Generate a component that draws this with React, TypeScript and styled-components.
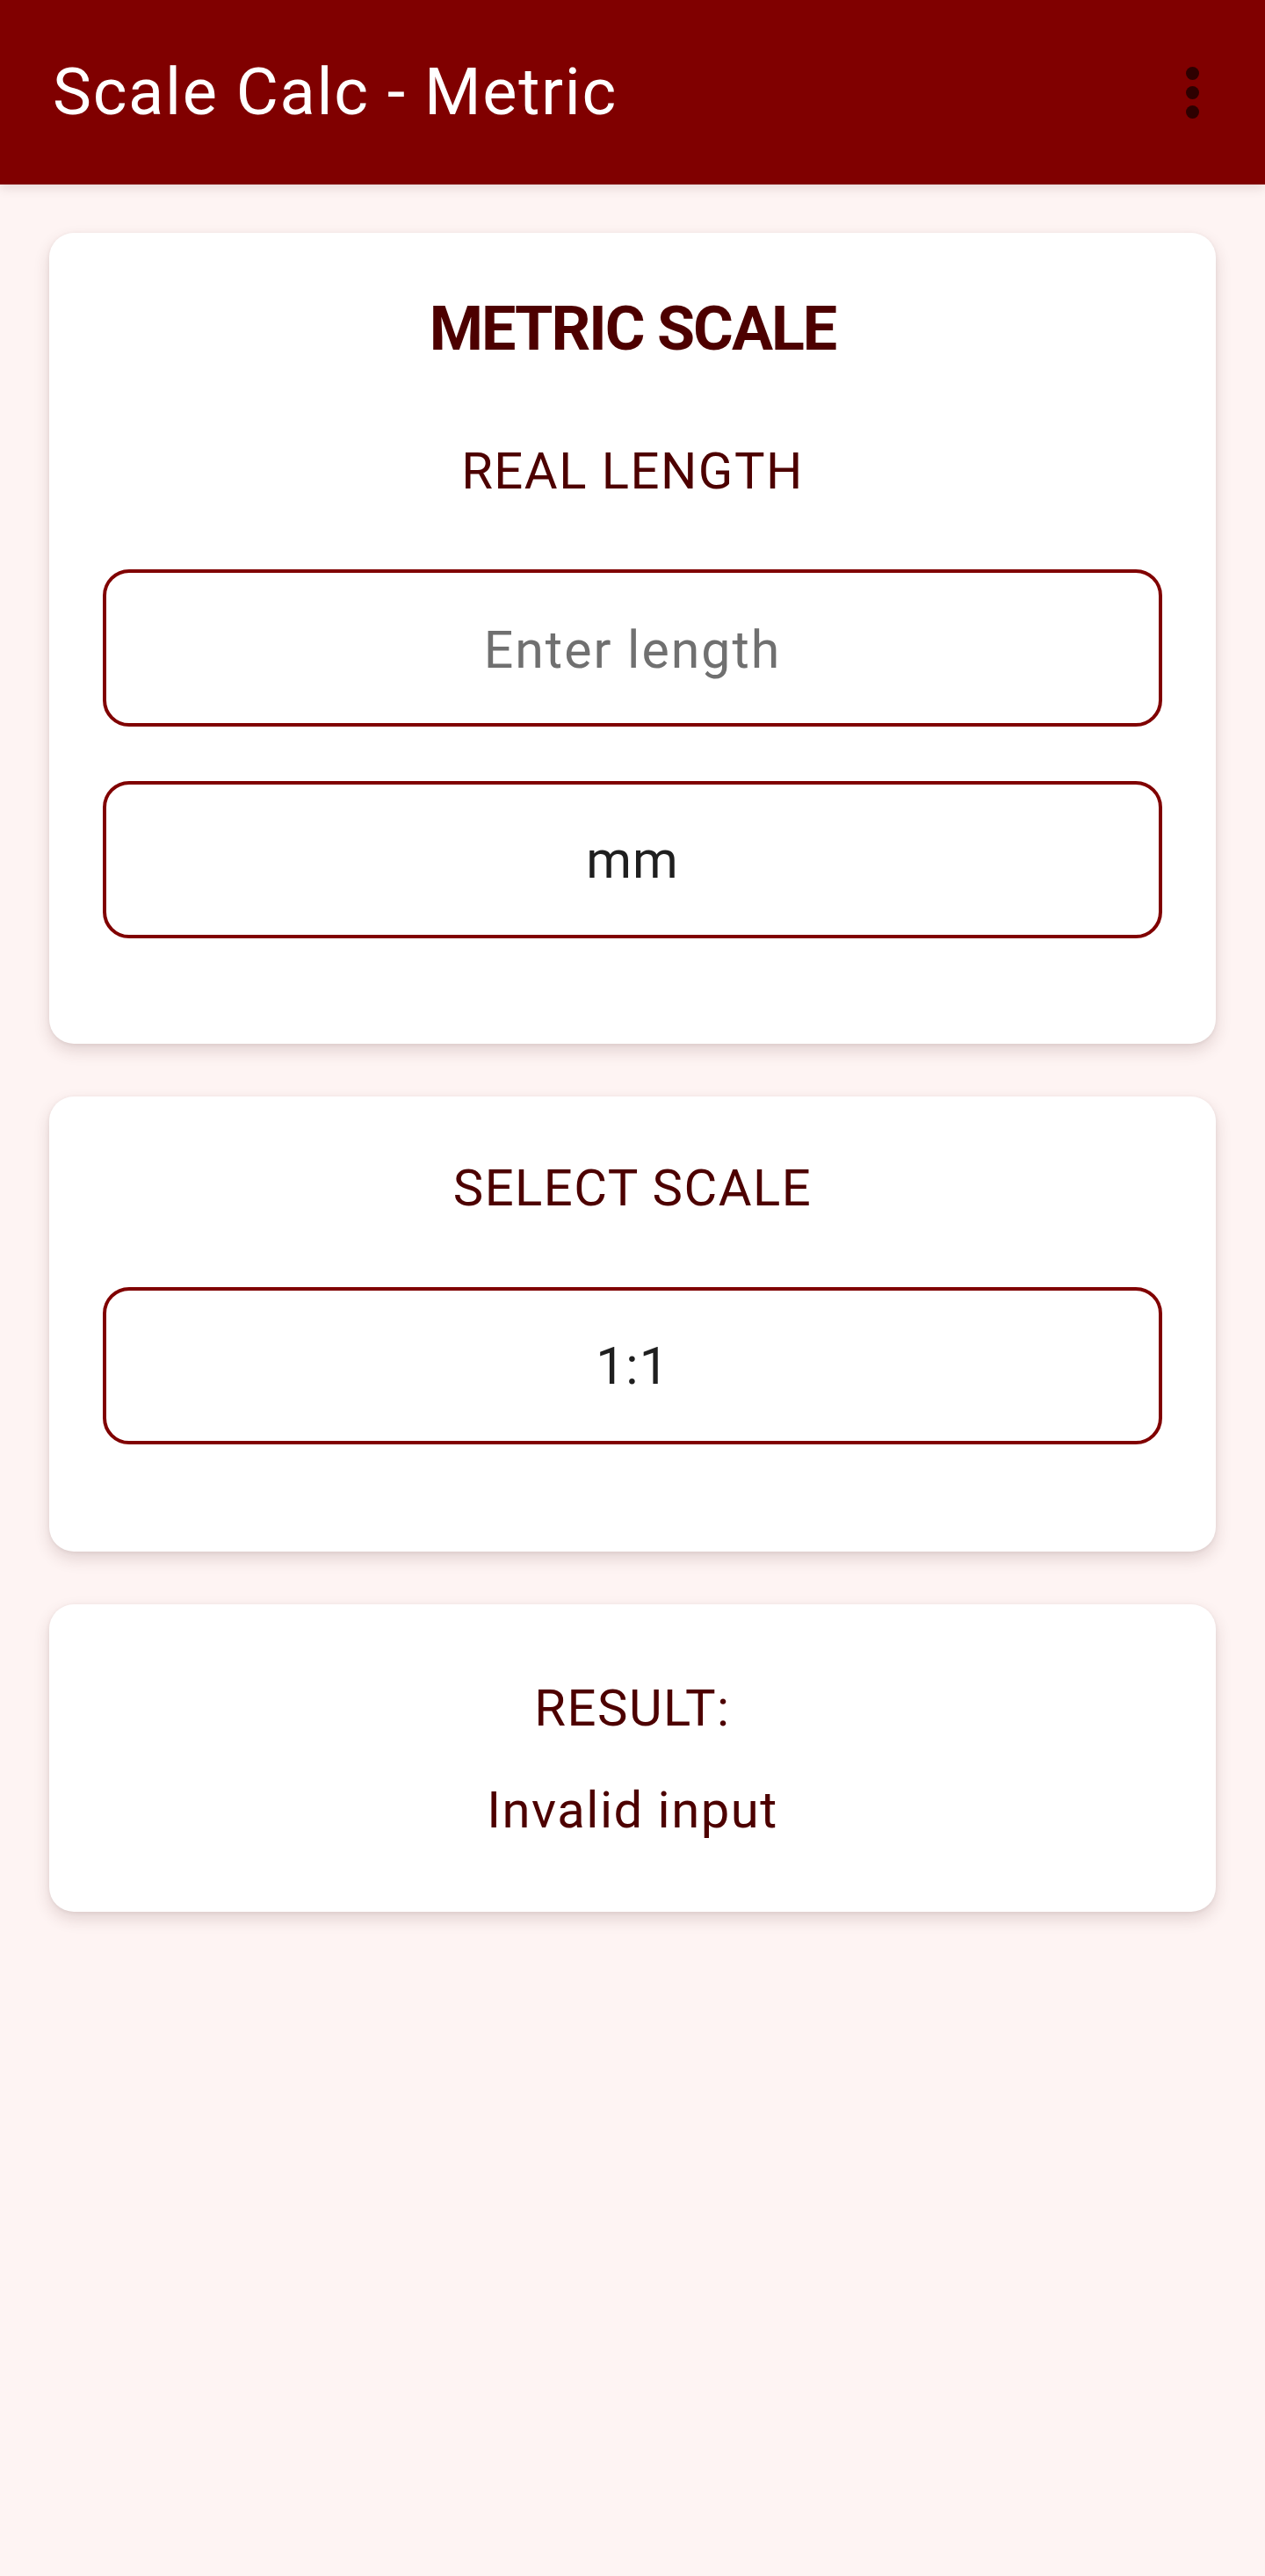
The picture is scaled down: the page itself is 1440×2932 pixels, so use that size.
import React from "react";
import styled, { createGlobalStyle } from "styled-components";

const GlobalStyle = createGlobalStyle`
  html, body {
    margin: 0;
    padding: 0;
    background: #fef4f3;
  }
  body {
    font-family: Roboto, "Noto Sans", "Liberation Sans", sans-serif;
  }
  * { box-sizing: border-box; }
`;

const Page = styled.div`
  min-height: 2932px;
  background: #fef4f3;
  display: flex;
  flex-direction: column;
`;

const AppBar = styled.header`
  height: 210px;
  background: #800000;
  display: flex;
  align-items: center;
  justify-content: space-between;
  padding: 0 75px 0 60px;
  box-shadow: 0 4px 12px rgba(60, 0, 0, 0.12);
  position: relative;
  z-index: 1;
`;

const AppTitle = styled.h1`
  margin: 0;
  color: #ffffff;
  font-family: Roboto, "Noto Sans", sans-serif;
  font-weight: 400;
  font-size: 74px;
  line-height: 88px;
  letter-spacing: 1.7px;
`;

const MenuButton = styled.div`
  display: flex;
  flex-direction: column;
  align-items: center;
  gap: 7px;
  width: 16px;
`;

const Dot = styled.span`
  width: 15px;
  height: 15px;
  border-radius: 50%;
  background: #2e0000;
`;

const Content = styled.main`
  display: flex;
  flex-direction: column;
  gap: 60px;
  padding: 55px 56px 0 56px;
`;

const Card = styled.section<{ $pt: number; $pb: number }>`
  background: #ffffff;
  border-radius: 28px;
  box-shadow: 0 8px 18px rgba(80, 40, 40, 0.16), 0 1px 4px rgba(80, 40, 40, 0.08);
  padding: ${(p) => p.$pt}px 61px ${(p) => p.$pb}px 61px;
  display: flex;
  flex-direction: column;
  align-items: stretch;
`;

const Heading = styled.h2<{ $mb: number }>`
  margin: 0 0 ${(p) => p.$mb}px 0;
  text-align: center;
  color: #4d0000;
  font-weight: 700;
  font-size: 70px;
  line-height: 84px;
  letter-spacing: -2px;
`;

const Label = styled.div<{ $mb: number }>`
  margin: 0 0 ${(p) => p.$mb}px 0;
  text-align: center;
  color: #4d0000;
  font-weight: 400;
  font-size: 58px;
  line-height: 70px;
  letter-spacing: 1.5px;
`;

const Field = styled.input`
  display: block;
  width: 100%;
  height: 179px;
  border: 4px solid #800000;
  border-radius: 30px;
  background: #ffffff;
  text-align: center;
  font-family: Roboto, "Noto Sans", sans-serif;
  font-size: 59px;
  letter-spacing: 2px;
  color: #1f1f1f;
  outline: none;
  padding: 4px 20px 0 20px;
  &::placeholder {
    color: #707070;
  }
`;

const Spinner = styled.div<{ $mt?: number }>`
  margin-top: ${(p) => p.$mt ?? 0}px;
  height: 179px;
  border: 4px solid #800000;
  border-radius: 30px;
  background: #ffffff;
  display: flex;
  align-items: center;
  justify-content: center;
  font-size: 59px;
  letter-spacing: 1px;
  color: #1f1f1f;
`;

export default function App() {
  return (
    <>
      <GlobalStyle />
      <Page>
        <AppBar>
          <AppTitle>Scale Calc - Metric</AppTitle>
          <MenuButton aria-label="More options">
            <Dot />
            <Dot />
            <Dot />
          </MenuButton>
        </AppBar>
        <Content>
          <Card $pt={67} $pb={120}>
            <Heading $mb={85}>METRIC SCALE</Heading>
            <Label $mb={77}>REAL LENGTH</Label>
            <Field placeholder="Enter length" />
            <Spinner $mt={62}>mm</Spinner>
          </Card>
          <Card $pt={69} $pb={122}>
            <Label $mb={78}>SELECT SCALE</Label>
            <Spinner>1:1</Spinner>
          </Card>
          <Card $pt={83} $pb={76}>
            <Label $mb={46}>RESULT:</Label>
            <Label $mb={5}>Invalid input</Label>
          </Card>
        </Content>
      </Page>
    </>
  );
}
